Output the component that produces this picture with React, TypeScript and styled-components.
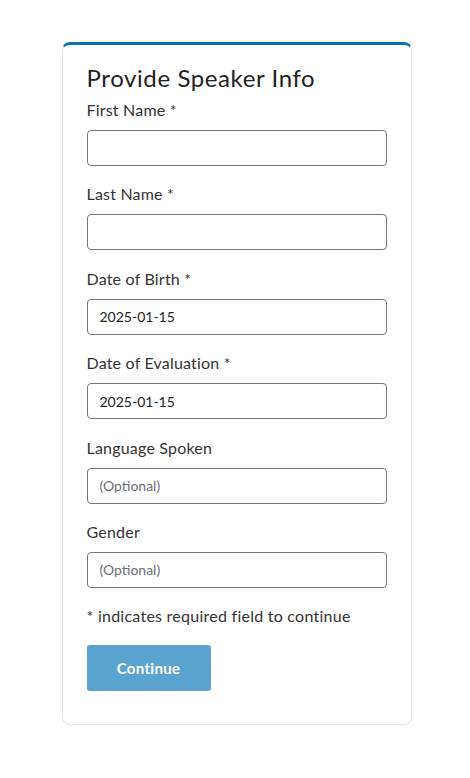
import React from 'react';
import styled, { createGlobalStyle } from 'styled-components';

const GlobalStyle = createGlobalStyle`
  html, body {
    margin: 0;
    padding: 0;
    background: #ffffff;
    font-family: Lato, "Noto Sans", Arial, sans-serif;
  }
`;

const Page = styled.div`
  display: flex;
  justify-content: center;
  padding: 42px 0 40px 3px;
`;

const Card = styled.form`
  width: 350px;
  box-sizing: border-box;
  background: #ffffff;
  border: 1px solid #e4e4e4;
  border-top: 3px solid #0b6fb6;
  border-radius: 8px;
  padding: 18px 24px 33px;
`;

const Title = styled.h2`
  margin: 0 0 5px;
  font-size: 24px;
  font-weight: 400;
  letter-spacing: 0.6px;
  color: #222222;
  line-height: 30px;
`;

const Field = styled.div`
  display: flex;
  flex-direction: column;
  margin-bottom: 16.4px;
`;

const Label = styled.label`
  font-size: 16px;
  line-height: 24px;
  letter-spacing: 0.2px;
  color: #333333;
  margin-bottom: 8px;
`;

const Input = styled.input`
  box-sizing: border-box;
  width: 300px;
  height: 36px;
  border: 1px solid #6f7782;
  border-radius: 4px;
  padding: 0 12px;
  font-family: inherit;
  font-size: 14px;
  color: #222222;
  outline: none;

  &::placeholder {
    color: #6b6f76;
  }
`;

const Note = styled.p`
  margin: 3px 0 17px;
  font-size: 16px;
  line-height: 24px;
  letter-spacing: 0.25px;
  color: #333333;
`;

const Button = styled.button`
  width: 124px;
  height: 46px;
  border: none;
  border-radius: 3px;
  background: #5aa3d1;
  color: #ffffff;
  font-family: inherit;
  font-size: 15px;
  font-weight: 700;
  letter-spacing: 0.3px;
  cursor: pointer;
`;

interface FieldDef {
  label: string;
  required?: boolean;
  value?: string;
  placeholder?: string;
}

const fields: FieldDef[] = [
  { label: 'First Name', required: true },
  { label: 'Last Name', required: true },
  { label: 'Date of Birth', required: true, value: '2025-01-15' },
  { label: 'Date of Evaluation', required: true, value: '2025-01-15' },
  { label: 'Language Spoken', placeholder: '(Optional)' },
  { label: 'Gender', placeholder: '(Optional)' },
];

const App: React.FC = () => {
  return (
    <>
      <GlobalStyle />
      <Page>
        <Card onSubmit={e => e.preventDefault()}>
          <Title>Provide Speaker Info</Title>
          {fields.map(f => (
            <Field key={f.label}>
              <Label>{f.label}{f.required && ' *'}</Label>
              <Input defaultValue={f.value} placeholder={f.placeholder} />
            </Field>
          ))}
          <Note>* indicates required field to continue</Note>
          <Button type="submit">Continue</Button>
        </Card>
      </Page>
    </>
  );
};

export default App;
